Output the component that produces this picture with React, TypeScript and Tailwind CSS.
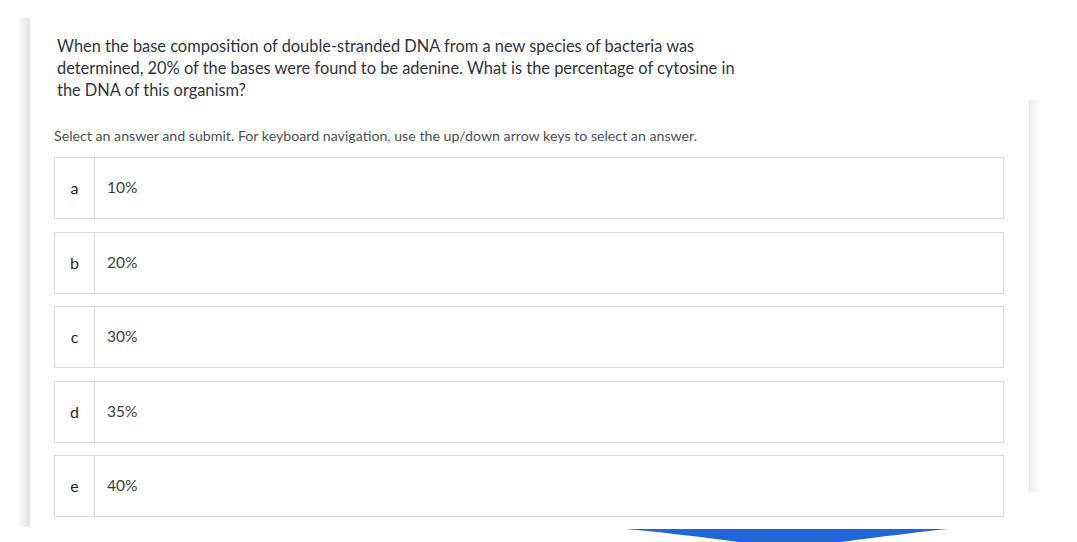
const options = [
  { key: "a", label: "10%" },
  { key: "b", label: "20%" },
  { key: "c", label: "30%" },
  { key: "d", label: "35%" },
  { key: "e", label: "40%" },
];

function AnswerOption({ letter, label }: { letter: string; label: string }) {
  return (
    <div className="flex h-[62px] border border-[#d9dade] bg-white">
      <div className="flex w-[40px] shrink-0 items-center justify-center border-r border-[#d9dade] text-[16px] text-[#23262f]">
        {letter}
      </div>
      <div className="flex items-center pl-[12px] text-[15.5px] text-[#3a3d46]">{label}</div>
    </div>
  );
}

export default function App() {
  return (
    <div className="relative h-[542px] w-[1077px] overflow-hidden bg-white font-['Lato',sans-serif]">
      <div className="flex">
        {/* left edge shadow of the question card */}
        <div className="ml-[17px] mt-[18px] h-[509px] w-[13px] shrink-0 bg-gradient-to-r from-white to-[#e2e2e2]" />

        <main className="w-[999px] shrink-0 pl-[24px] pr-[25px] pt-[35px]">
          <p className="ml-[3px] w-[700px] text-[16.4px] leading-[22px] text-[#2f3340]">
            When the base composition of double-stranded DNA from a new species of bacteria was
            determined, 20% of the bases were found to be adenine. What is the percentage of cytosine in
            the DNA of this organism?
          </p>
          <p className="mt-[26px] text-[14.2px] leading-[18px] text-[#4b4f58]">
            Select an answer and submit. For keyboard navigation, use the up/down arrow keys to select an answer.
          </p>
          <div className="mt-[12px] flex flex-col gap-[12.5px]">
            {options.map((o) => (
              <AnswerOption key={o.key} letter={o.key} label={o.label} />
            ))}
          </div>
        </main>

        {/* right side panel edge */}
        <div className="mt-[100px] h-[392px] w-[12px] shrink-0 border-l border-[#e4e4e4] bg-gradient-to-r from-[#efefef] to-white" />
      </div>

      {/* top of the floating submit button */}
      <svg className="absolute left-[625px] top-[529px]" width="322" height="13" viewBox="0 0 322 13">
        <path d="M0 0 L322 0 C300 2 240 10 215 13 L115 13 C90 10 30 2 0 0 Z" fill="#1f66d6" />
      </svg>
    </div>
  );
}
